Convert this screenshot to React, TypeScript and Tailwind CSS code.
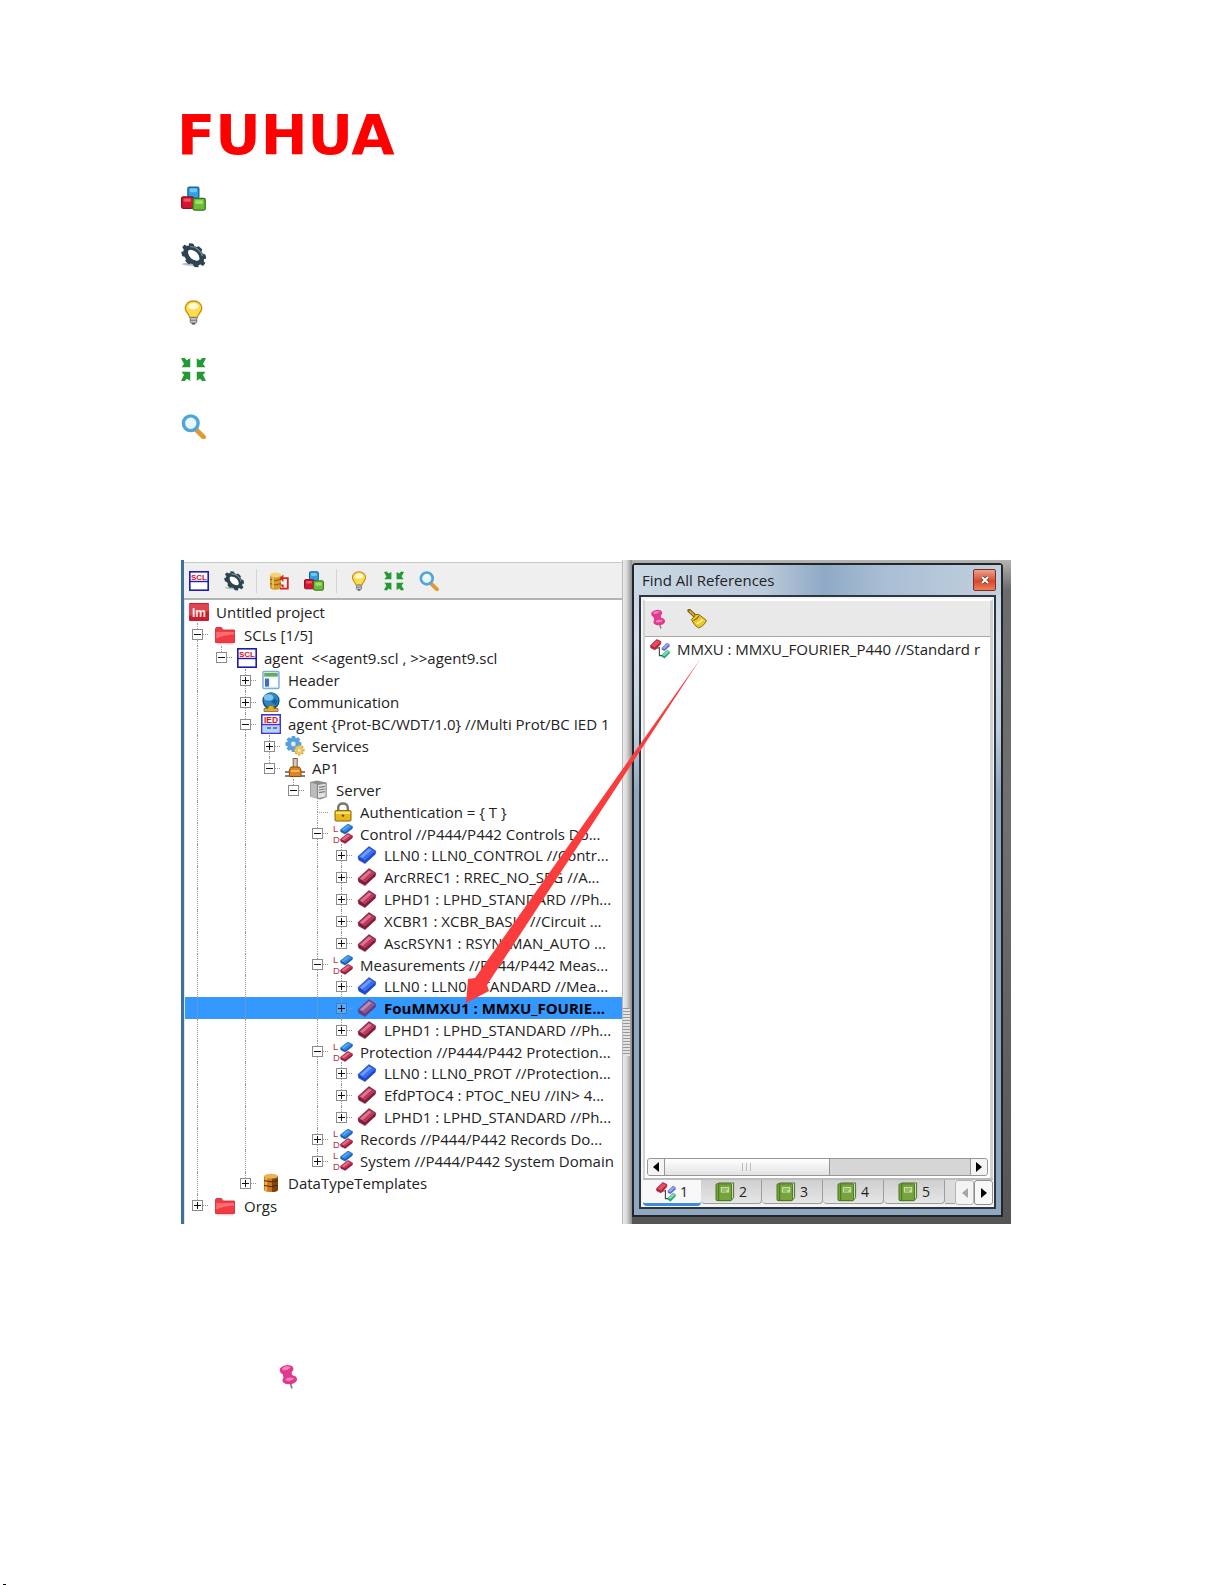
import { useState, type ReactNode } from "react";
import clsx from "clsx";

type IconName =
  | "scl" | "gear" | "dbReload" | "cubes" | "bulb" | "collapse" | "search" | "im" | "folder" | "header"
  | "globe" | "ied" | "services" | "plug" | "server" | "lock" | "ld" | "ln0" | "ln" | "lnSel" | "db"
  | "pin" | "broom" | "refs" | "book";

const gearTeeth = [0, 45, 90, 135, 180, 225, 270, 315];

function Brick({ fill, edge, light }: { fill: string; edge: string; light: string }) {
  return (
    <g strokeLinejoin="round">
      <path d="M1 11.4 12 1.6 18.8 6 18.2 9.2 8 18.6 1.8 15Z" fill={edge} stroke={edge} strokeWidth=".6" />
      <path d="M1.8 11.4 12 2.4 18.2 6.2 8 15.6Z" fill={fill} />
      <path d="M3 11.4 12 3.4 14.6 5 5.6 13Z" fill={light} />
    </g>
  );
}

const drawings: Record<IconName, ReactNode> = {
  scl: (
    <g>
      <rect x="0.8" y="0.8" width="18.4" height="18.4" fill="#fff" stroke="#1c1cb4" strokeWidth="1.6" />
      <path d="M1 10.5H19" stroke="#1c1cb4" strokeWidth="1.4" />
      <text x="10" y="8.6" fontSize="8" fontWeight="700" fill="#e00b1c" textAnchor="middle">SCL</text>
    </g>
  ),
  gear: (
    <g>
      <path d="M0 16.8 8 15 14 18.6 4 18Z" fill="#b9bec1" />
      <g transform="translate(10.2 9.8) rotate(42) scale(1.12 .8)">
        {gearTeeth.map((a) => (
          <rect key={a} x="-2.1" y="-10" width="4.2" height="5" rx="1" fill="#2c4450" transform={`rotate(${a})`} />
        ))}
        <circle r="6.2" fill="none" stroke="#2c4450" strokeWidth="4.4" />
        <path d="M-6 -4A7.2 7.2 0 0 1 5 -5.2" fill="none" stroke="#7393a0" strokeWidth="1.2" />
        <ellipse rx="5" ry="3.6" fill="#fff" />
      </g>
    </g>
  ),
  dbReload: (
    <g>
      <path d="M1 4V16.5C1 19.5 12 19.5 12 16.5V4Z" fill="#d99a2b" />
      <ellipse cx="6.5" cy="4" rx="5.5" ry="2.4" fill="#f6d279" />
      <path d="M1 8.3Q6.5 11 12 8.3M1 12.6Q6.5 15.3 12 12.6" fill="none" stroke="#8d5b12" strokeWidth="1" />
      <path d="M4 6.5V17" stroke="#f3c768" strokeWidth="1.6" />
      <path d="M11 17.6H18.8V7.2H13.6" fill="none" stroke="#d9261c" strokeWidth="1.8" />
      <path d="M14.4 3.4V11L10.4 7.2ZM11 13.6H14.6V17.6" fill="#d9261c" />
    </g>
  ),
  cubes: (
    <g strokeWidth="1">
      <rect x="5.5" y="0.8" width="8.8" height="9" rx="1.2" fill="#2f9fe4" stroke="#1a5e96" />
      <rect x="7" y="2" width="5.8" height="3" rx="1" fill="#72c5f6" />
      <rect x="0.5" y="8.6" width="9.5" height="9.2" rx="1.2" fill="#d3152f" stroke="#8c1122" />
      <rect x="2" y="10" width="6" height="2.6" rx="1" fill="#ee5266" />
      <rect x="9.6" y="9.8" width="9.8" height="9.4" rx="1.2" fill="#6cbd37" stroke="#35721a" />
      <rect x="11.4" y="11.4" width="6.2" height="3" rx="1" fill="#a4dd72" />
    </g>
  ),
  bulb: (
    <g>
      <path d="M10 .8C5.7.8 3.4 3.7 3.4 6.6 3.4 9.6 6.4 11 7 14H13C13.6 11 16.6 9.6 16.6 6.6 16.6 3.7 14.3.8 10 .8Z" fill="#fcdc4b" stroke="#c98f1a" strokeWidth="1.1" />
      <path d="M10 2.4C7 2.4 5.6 4.3 5.7 6.2 7.5 8 12 8 14.2 6 14.2 4 13 2.4 10 2.4Z" fill="#fffbd6" />
      <rect x="7.4" y="14" width="5.2" height="4.4" rx="1" fill="#c4c8ca" stroke="#6e7478" strokeWidth=".8" />
      <path d="M7.5 16.2H12.5" stroke="#6e7478" strokeWidth=".8" />
      <path d="M8.6 18.6H11.4V19.6H8.6Z" fill="#3b3f42" />
    </g>
  ),
  collapse: (
    <g fill="#239a35">
      <path d="M0 1 2.8 .6 4.6 2.6 7.4 1V8.2H.4L2.4 5.6Z" />
      <path d="M20 1 17.2 .6 15.2 2.6 12.6 1V8.2H19.6L17.6 5.6Z" />
      <path d="M0 19 2.8 19.4 4.6 17.4 7.4 19V11.8H.4L2.4 14.4Z" />
      <path d="M20 19 17.2 19.4 15.2 17.4 12.6 19V11.8H19.6L17.6 14.4Z" />
    </g>
  ),
  search: (
    <g>
      <path d="M12.4 12.8 18 18.4" stroke="#e39a2d" strokeWidth="3.8" strokeLinecap="round" />
      <circle cx="7.8" cy="7.4" r="5.9" fill="#eaf6fd" stroke="#4fa5dc" strokeWidth="2.7" />
      <path d="M4.8 6.2Q6 4 8.6 4" fill="none" stroke="#fff" strokeWidth="1.3" />
    </g>
  ),
  im: (
    <g>
      <rect width="20" height="18" y="1" rx="1" fill="#c91f2b" />
      <path d="M0 2H20V9L0 14Z" fill="#dd4650" />
      <text x="10" y="14.6" fontSize="12" fontWeight="700" fill="#ffe9e9" textAnchor="middle">Im</text>
    </g>
  ),
  folder: (
    <g>
      <path d="M.5 4Q.5 2.5 2 2.5H6.5L8 5H19.5V17.5H.5Z" fill="#f23a44" stroke="#d42f3a" strokeWidth=".9" />
      <path d="M1.2 7H19V9.5Q9 10 1.2 13.5Z" fill="#fb6b70" />
      <path d="M2 18.8H18" stroke="#f4b6b8" strokeWidth="1" />
    </g>
  ),
  header: (
    <g>
      <rect x="2" y="1.5" width="16" height="17" rx="1" fill="#e8f3fb" stroke="#79aede" strokeWidth="1.4" />
      <rect x="3.2" y="3" width="13.6" height="3.6" fill="#62ad57" />
      <rect x="4" y="8.6" width="4" height="8" fill="#3f6fb0" />
      <rect x="9.6" y="8.6" width="7" height="8" fill="#fff" />
    </g>
  ),
  globe: (
    <g>
      <circle cx="10" cy="8.8" r="8.6" fill="#14517f" />
      <circle cx="10" cy="8" r="7.4" fill="#2c86c4" />
      <ellipse cx="7.6" cy="5.4" rx="4.6" ry="3.2" fill="#7fc4ec" />
      <path d="M10 9.5 14 6.5 16.6 9.5 14 13Z" fill="#1c5f97" />
      <path d="M3 16.5H7V14.5Q10 12 13 14.5V16.5H17V19.5H3Z" fill="#e0ad35" stroke="#7d5b14" strokeWidth=".7" />
    </g>
  ),
  ied: (
    <g>
      <rect x="0.8" y="0.8" width="18.4" height="18.4" fill="#fff" stroke="#3a36d8" strokeWidth="1.6" />
      <rect x="1.6" y="11" width="16.8" height="7.4" fill="#b9d3f6" />
      <path d="M1 10.5H19" stroke="#3a36d8" strokeWidth="1.4" />
      <path d="M6 14H10M12 14H16" stroke="#3a62b8" strokeWidth="1.6" />
      <text x="10" y="8.8" fontSize="8.5" fontWeight="700" fill="#e00b1c" textAnchor="middle">IED</text>
    </g>
  ),
  services: (
    <g>
      <g transform="translate(8.4 8)">
        {gearTeeth.map((a) => (
          <rect key={a} x="-1.9" y="-8" width="3.8" height="4" rx=".8" fill="#5a9fd8" transform={`rotate(${a})`} />
        ))}
        <circle r="4.4" fill="#d9ecfa" stroke="#5a9fd8" strokeWidth="4" />
      </g>
      <g transform="translate(14.2 14.2)">
        {gearTeeth.map((a) => (
          <rect key={a} x="-1.2" y="-5.4" width="2.4" height="3" fill="#d9a93d" transform={`rotate(${a})`} />
        ))}
        <circle r="2.9" fill="#fff3cf" stroke="#eac568" strokeWidth="2.8" />
      </g>
    </g>
  ),
  plug: (
    <g>
      <rect x="8.2" y=".5" width="4" height="9" fill="#d8c9b9" stroke="#76614e" strokeWidth="1" />
      <path d="M6 9H14.4L16 12V18.5H4.4V12Z" fill="#e08420" stroke="#8d4a0c" strokeWidth="1" />
      <path d="M6 13H14.4" stroke="#ffc069" strokeWidth="1.8" />
      <path d="M0 14H4.4M0 18H4.4M16 14H20M16 18H20" stroke="#6b5442" strokeWidth="1.6" />
    </g>
  ),
  server: (
    <g>
      <path d="M1 2 8 .5 17.5 2.4V17L11 19.6 1 16.5Z" fill="#8e8e8e" />
      <path d="M1.6 2.4 7.8 4.2V18.2L1.6 16.2Z" fill="#bdbdbd" />
      <path d="M8.6 4.6 17 3.2V16.8L8.6 18.8Z" fill="#e2e2e2" stroke="#777" strokeWidth=".7" />
      <path d="M10 7.4 15.8 6.4M10 10 15.8 9M10 12.6 15.8 11.6" stroke="#777" strokeWidth="1.1" />
    </g>
  ),
  lock: (
    <g>
      <path d="M5.2 9V5.8C5.2 0 14.8 0 14.8 5.8V9" fill="none" stroke="#72776f" strokeWidth="2.4" />
      <rect x="2" y="8.6" width="16" height="10.4" rx="1" fill="#eab619" stroke="#86640a" strokeWidth="1" />
      <path d="M3 9.8H17V12H3Z" fill="#fbe068" />
      <circle cx="10" cy="13.6" r="1.2" fill="#5d4300" />
    </g>
  ),
  ld: (
    <g>
      <text x="0" y="8" fontSize="9.5" fill="#b8323f">L</text>
      <text x="0" y="19" fontSize="9.5" fill="#b8323f">D</text>
      <g transform="translate(6.6 -1) scale(.7 .6)"><Brick fill="#2f86e6" edge="#1c5fae" light="#52a8f4" /></g>
      <g transform="translate(6.6 8.4) scale(.7 .6)"><Brick fill="#cc3355" edge="#8c1f3d" light="#e6738a" /></g>
    </g>
  ),
  ln0: <Brick fill="#3a6ef2" edge="#1f48c4" light="#6f9dff" />,
  ln: <Brick fill="#b93a5c" edge="#7c1c3c" light="#dc7690" />,
  lnSel: <Brick fill="#93568f" edge="#5f4080" light="#b78ab8" />,
  db: (
    <g>
      <path d="M3 3V17C3 19.6 17 19.6 17 17V3Z" fill="#c9781c" />
      <path d="M11 3H17V17Q15.5 19 11 19Z" fill="#7f430b" />
      <ellipse cx="10" cy="3.2" rx="7" ry="2.4" fill="#eeb055" />
      <path d="M5 5V18" stroke="#f3ad48" strokeWidth="2.4" />
      <path d="M3 7.6Q10 10 17 7.6M3 12.4Q10 15 17 12.4" fill="none" stroke="#4f2906" strokeWidth="1" />
    </g>
  ),
  pin: (
    <g>
      <path d="M10.6 15 12 19.6" stroke="#7f8587" strokeWidth="1.4" />
      <path d="M2.6 3.2Q6.8-.8 12 1.6 14.4 4 11.8 6.4L12 8.8Q16.4 9.6 16 13 14 17 7.2 16 2.8 14.6 5.2 11L4.6 8.2Q1.2 6.4 2.6 3.2Z" fill="#e2388d" />
      <path d="M4 3.6Q7.2.8 11 2.6 9 5.2 4.8 5ZM6.8 12Q9.8 9.8 14 11.4 11.6 14 7.6 13.4Z" fill="#f685bd" />
    </g>
  ),
  broom: (
    <g>
      <path d="M2.2 1.6 8 7" stroke="#8a6414" strokeWidth="3.8" strokeLinecap="round" />
      <path d="M2.4 1.8 7.4 6.6" stroke="#dba93b" strokeWidth="1.6" />
      <path d="M4.4 10.4Q7.4 8.6 8.4 5.4L12 5.6 19.4 11.4Q17.8 16.4 11.6 19Q6.4 16 4.4 10.4Z" fill="#ecc92a" stroke="#8a6a10" strokeWidth="1" />
      <path d="M6.4 11.4Q10.6 10 12 6.8" fill="none" stroke="#8a6a10" strokeWidth="1.1" />
      <path d="M9.6 14.8Q14 13 15.6 10.4" fill="none" stroke="#fff08c" strokeWidth="1.8" />
    </g>
  ),
  refs: (
    <g>
      <path d="M6 9H9.4M9.4 8V16.6H13" fill="none" stroke="#444" strokeWidth="1.1" />
      <path d="M.6 6.4 6.8.6 11 2.6 10.6 5 5 10.8.8 8.8Z" fill="#b3233c" stroke="#b3233c" strokeWidth=".8" />
      <path d="M1.2 6.4 6.8 1.2 10.4 3 4.8 8.4Z" fill="#ea4a62" />
      <path d="M11.6 9 17 3.8 19.8 5.4 19.4 7.4 14.6 12 11.8 10.8Z" fill="#6168c9" />
      <path d="M12 9 17 4.4 19.2 5.6 14.6 10.2Z" fill="#9aa1f0" />
      <path d="M11.6 16 17 11 19.8 12.6 19.4 14.6 14.6 19.4 11.8 17.8Z" fill="#2c9a6c" />
      <path d="M12 16 17 11.6 19.2 12.8 14.6 17.2Z" fill="#74e0b0" />
    </g>
  ),
  book: (
    <g>
      <path d="M3.6 1H18.6V15.6L16 18.6H2.6Z" fill="#dfe7d2" stroke="#48702a" strokeWidth="1" />
      <rect x="1" y="1.8" width="15.6" height="16.8" rx="1" fill="#73a53b" stroke="#4c7423" strokeWidth="1" />
      <path d="M3.6 2.2V18.2" stroke="#4f7a23" strokeWidth="1.2" />
      <rect x="5.8" y="5" width="8.4" height="5.6" fill="#c8de9f" />
      <path d="M7 7H13M7 9H11.4" stroke="#5d8a2c" strokeWidth=".9" />
    </g>
  ),
};

function Icon({ name, className = "h-5 w-5" }: { name: IconName; className?: string }) {
  return (
    <svg viewBox="0 0 20 20" className={clsx("shrink-0 font-['Liberation_Sans',sans-serif]", className)} aria-hidden="true">
      {drawings[name]}
    </svg>
  );
}

type TreeNode = { label: string; icon: IconName; leaf?: boolean; selected?: boolean; children?: TreeNode[] };

const ln = (label: string, icon: IconName = "ln"): TreeNode => ({ label, icon });

const tree: TreeNode[] = [
  {
    label: "SCLs [1/5]",
    icon: "folder",
    children: [
      {
        label: "agent  <<agent9.scl , >>agent9.scl",
        icon: "scl",
        children: [
          { label: "Header", icon: "header" },
          { label: "Communication", icon: "globe" },
          {
            label: "agent {Prot-BC/WDT/1.0} //Multi Prot/BC IED 1",
            icon: "ied",
            children: [
              { label: "Services", icon: "services" },
              {
                label: "AP1",
                icon: "plug",
                children: [
                  {
                    label: "Server",
                    icon: "server",
                    children: [
                      { label: "Authentication = { T }", icon: "lock", leaf: true },
                      {
                        label: "Control //P444/P442 Controls Do...",
                        icon: "ld",
                        children: [
                          ln("LLN0 : LLN0_CONTROL //Contr...", "ln0"),
                          ln("ArcRREC1 : RREC_NO_SEG //A..."),
                          ln("LPHD1 : LPHD_STANDARD //Ph..."),
                          ln("XCBR1 : XCBR_BASIC //Circuit ..."),
                          ln("AscRSYN1 : RSYN_MAN_AUTO ..."),
                        ],
                      },
                      {
                        label: "Measurements //P444/P442 Meas...",
                        icon: "ld",
                        children: [
                          ln("LLN0 : LLN0_STANDARD //Mea...", "ln0"),
                          { label: "FouMMXU1 : MMXU_FOURIE...", icon: "lnSel", selected: true },
                          ln("LPHD1 : LPHD_STANDARD //Ph..."),
                        ],
                      },
                      {
                        label: "Protection //P444/P442 Protection...",
                        icon: "ld",
                        children: [
                          ln("LLN0 : LLN0_PROT //Protection...", "ln0"),
                          ln("EfdPTOC4 : PTOC_NEU //IN> 4..."),
                          ln("LPHD1 : LPHD_STANDARD //Ph..."),
                        ],
                      },
                      { label: "Records //P444/P442 Records Do...", icon: "ld" },
                      { label: "System //P444/P442 System Domain", icon: "ld" },
                    ],
                  },
                ],
              },
            ],
          },
          { label: "DataTypeTemplates", icon: "db" },
        ],
      },
    ],
  },
  { label: "Orgs", icon: "folder" },
];

const dotted = "border-l border-dotted border-[#9a9a9a]";

function Row({ node, trail, last }: { node: TreeNode; trail: boolean[]; last: boolean }) {
  const [open, setOpen] = useState(!!node.children);
  const wide = node.icon === "folder";
  const height = trail.length < 2 ? "h-[23px]" : node.icon === "ld" && node.children ? "h-[21px]" : "h-[22px]";

  return (
    <li>
      <div className={clsx("flex items-center whitespace-pre pl-[7px]", height, node.selected && "bg-[#3399ff] font-bold text-black")}>
        {trail.map((more, i) => (
          <span key={i} className="flex h-full w-6 shrink-0 pl-[5px]">
            {more && <span className={clsx("h-full", dotted)} />}
          </span>
        ))}
        <span className="flex h-full w-[11px] shrink-0 flex-col items-center">
          <span className={clsx("flex-1", dotted)} />
          {!node.leaf && (
            <button
              aria-label={open ? "Collapse" : "Expand"}
              onClick={() => setOpen(!open)}
              className={clsx(
                "flex h-[11px] w-[11px] items-center justify-center border",
                node.selected ? "border-[#3f7fc4] bg-[#5aa9f5]" : "border-[#8c8c8c] bg-white"
              )}
            >
              <svg viewBox="0 0 7 7" className="h-[7px] w-[7px]" shapeRendering="crispEdges" aria-hidden="true">
                <path d={node.children && open ? "M0 3.5H7" : "M0 3.5H7M3.5 0V7"} stroke="#111" />
              </svg>
            </button>
          )}
          <span className={clsx("flex-1", !last && dotted)} />
        </span>
        <span className={clsx("mr-1 h-px border-t border-dotted border-[#9a9a9a]", node.leaf ? "-ml-1 w-[9px]" : "w-[5px]")} />
        <Icon name={node.icon} className={wide ? "mr-[9px] ml-[3px] h-5 w-5" : "mr-[7px] ml-px h-5 w-5"} />
        <span>{node.label}</span>
      </div>
      {open && node.children && <Rows nodes={node.children} trail={[...trail, !last]} />}
    </li>
  );
}

function Rows({ nodes, trail }: { nodes: TreeNode[]; trail: boolean[] }) {
  return (
    <ul>
      {nodes.map((node, i) => (
        <Row key={node.label} node={node} trail={trail} last={i === nodes.length - 1} />
      ))}
    </ul>
  );
}

function ToolButton({ name, label }: { name: IconName; label: string }) {
  return (
    <button title={label} className="h-5 w-5 shrink-0">
      <Icon name={name} />
    </button>
  );
}

function Divider() {
  return <span className="-mx-[3px] h-6 w-px bg-[#d4d4d4]" />;
}

function ProjectPane() {
  return (
    <section className="flex min-w-0 flex-1 flex-col overflow-hidden border-l-[3px] border-[#3f719f] bg-white">
      <div className="mt-[2px] flex h-[38px] items-center gap-[15px] border-t border-b-2 border-t-[#c8c8c8] border-b-[#b4b4b4] bg-[#efefef] pl-[5px]">
        <ToolButton name="scl" label="SCL" />
        <ToolButton name="gear" label="Settings" />
        <Divider />
        <ToolButton name="dbReload" label="Reload templates" />
        <ToolButton name="cubes" label="Components" />
        <Divider />
        <ToolButton name="bulb" label="Hints" />
        <ToolButton name="collapse" label="Collapse all" />
        <ToolButton name="search" label="Search" />
      </div>
      <div className="flex-1 overflow-hidden border-l border-[#e3e3e3]">
        <div className="flex h-[23px] items-center gap-[7px] pl-1">
          <Icon name="im" />
          <span>Untitled project</span>
        </div>
        <Rows nodes={tree} trail={[]} />
      </div>
    </section>
  );
}

function Caret({ left, faded }: { left?: boolean; faded?: boolean }) {
  return (
    <svg viewBox="0 0 6 10" className="h-[10px] w-[6px]" aria-hidden="true">
      <path d={left ? "M6 0V10L0 5Z" : "M0 0V10L6 5Z"} fill={faded ? "#a5a5a5" : "#000"} />
    </svg>
  );
}

function ReferencesWindow() {
  const [tab, setTab] = useState(1);
  return (
    <section className="flex h-full flex-col rounded-t-[4px] border-2 border-[#20262c] bg-[linear-gradient(#c3d1e0,#d5dfea_12%,#c0cfde_25%,#8fa8bf_35%,#8fa8bf)]">
      <header className="flex h-[30px] items-center justify-between bg-[linear-gradient(90deg,#cbd8e5,#bccbdb_35%,#8fa9c6_52%,#a9bed4_68%,#c2d0de)] pr-[5px] pl-2">
        <h2>Find All References</h2>
        <button
          aria-label="Close"
          className="flex h-[22px] w-[23px] items-center justify-center rounded-[2px] border border-[#7c2f25] bg-[linear-gradient(#eda08d,#d9543a_50%,#d9452b_55%,#ee8058)]"
        >
          <svg viewBox="0 0 10 8" className="h-2 w-[10px]" aria-hidden="true">
            <path d="M2 1 8 7M8 1 2 7" stroke="#5c3b38" strokeWidth="3.6" />
            <path d="M2 1 8 7M8 1 2 7" stroke="#fff" strokeWidth="2" />
          </svg>
        </button>
      </header>
      <div className="mx-[5px] mb-[6px] flex min-h-0 flex-1 flex-col border-2 border-[#2b3640] bg-[#f4f4f4] p-[2px] pr-px">
        <div className="flex min-h-0 flex-1 flex-col border-t-2 border-r-[3px] border-l-[2px] border-t-white border-r-[#d2d2d2] border-l-[#d2d2d2] bg-white">
          <div className="flex h-[36px] shrink-0 items-center gap-[18px] border-b border-[#a8a8a8] bg-[#e9e9e9] pl-1">
            <ToolButton name="pin" label="Pin" />
            <ToolButton name="broom" label="Clear" />
          </div>
          <div className="min-h-0 flex-1 overflow-hidden">
            <div className="flex h-6 items-center gap-[7px] overflow-hidden pl-[5px] whitespace-nowrap">
              <Icon name="refs" />
              <span>MMXU : MMXU_FOURIER_P440 //Standard r</span>
            </div>
          </div>
          <div className="mx-[2px] mb-[2px] flex h-[18px] shrink-0 overflow-hidden rounded-[3px] border border-[#969696] bg-[#d6d6d6]">
            <button aria-label="Scroll left" className="flex w-[17px] shrink-0 items-center justify-center border-r border-[#969696] bg-[#f4f4f4]">
              <Caret left />
            </button>
            <div className="flex flex-1">
              <div className="flex w-[54%] items-center justify-center gap-[3px] border-r border-[#969696] bg-[linear-gradient(#fff,#e2e2e2)]">
                <i className="h-2 w-px bg-[#bbb]" />
                <i className="h-2 w-px bg-[#bbb]" />
                <i className="h-2 w-px bg-[#bbb]" />
              </div>
            </div>
            <button aria-label="Scroll right" className="flex w-[17px] shrink-0 items-center justify-center border-l border-[#969696] bg-[#f4f4f4]">
              <Caret />
            </button>
          </div>
        </div>
        <div className="flex h-[27px] shrink-0 items-start border-t-2 border-[#bcbcbc] bg-[#f1f1f1]" role="tablist">
          {[1, 2, 3, 4, 5].map((n) => (
            <button
              key={n}
              role="tab"
              aria-selected={tab === n}
              onClick={() => setTab(n)}
              className={clsx(
                "flex items-center justify-center gap-1 rounded-b-[4px] text-[14px]",
                n === 1 ? "w-[58px]" : "w-[61px]",
                tab === n ? "h-[26px] border-b-[3px] border-[#3f8ae0] bg-[#f8f8f8]" : "h-6 border-r border-b border-[#9d9d9d] bg-[linear-gradient(#cfcfcf,#e6e6e6)]"
              )}
            >
              <Icon name={n === 1 ? "refs" : "book"} />
              {n}
            </button>
          ))}
          <span className="h-6 flex-1 border-b border-[#9d9d9d] bg-[#dcdcdc]" />
          <button aria-label="Previous tab" className="flex h-[25px] w-[19px] items-center justify-center rounded-[3px] border border-[#b5b5b5] bg-[#f3f3f3]">
            <Caret left faded />
          </button>
          <button aria-label="Next tab" className="flex h-[25px] w-[19px] items-center justify-center rounded-[3px] border border-[#8f8f8f] bg-[#f8f8f8]">
            <Caret />
          </button>
        </div>
      </div>
    </section>
  );
}

const legend: IconName[] = ["cubes", "gear", "bulb", "collapse", "search"];

export default function App() {
  return (
    <main className="flex min-h-screen flex-col bg-white pt-[107px] font-['Open_Sans','Noto_Sans',sans-serif] text-[15px] leading-5 text-[#222]">
      <div className="flex flex-1 flex-col pr-[214px] pl-[181px]">
        <h1 className="-ml-1 font-['DejaVu_Sans',sans-serif] text-[56px] leading-[56px] font-bold text-[#fe0000]">FUHUA</h1>
        <ul className="mt-[23px] flex flex-col gap-8">
          {legend.map((name) => (
            <li key={name}>
              <Icon name={name} className="block h-[25px] w-[25px]" />
            </li>
          ))}
        </ul>
        <figure className="relative mt-[121px] flex h-[664px]">
          <ProjectPane />
          <div className="flex w-[10px] shrink-0 items-center border-l border-[#b9b9b9] bg-[linear-gradient(90deg,#ececec,#d8d8d8_40%,#8e8e8e)] pt-[280px]">
            <span className="h-12 w-[7px] bg-[repeating-linear-gradient(#999_0_1px,#e4e4e4_1px_3px)]" />
          </div>
          <div className="w-[379px] shrink-0 bg-[linear-gradient(#b5b5b3,#6b6b6b_30px,#707070_40%,#555)] pt-[3px] pr-2 pb-[7px]">
            <ReferencesWindow />
          </div>
          <svg viewBox="0 0 830 664" className="pointer-events-none absolute inset-0 h-full w-full" aria-hidden="true">
            <path d="M520 98 306 425 308 431 285 443 287 419 294 418Z" fill="#fa3c3c" />
          </svg>
        </figure>
        <Icon name="pin" className="mt-[140px] ml-24 block h-[25px] w-[25px]" />
      </div>
      <footer className="pl-[3px]">
        <span className="block h-px w-[3px] bg-black" />
      </footer>
    </main>
  );
}
